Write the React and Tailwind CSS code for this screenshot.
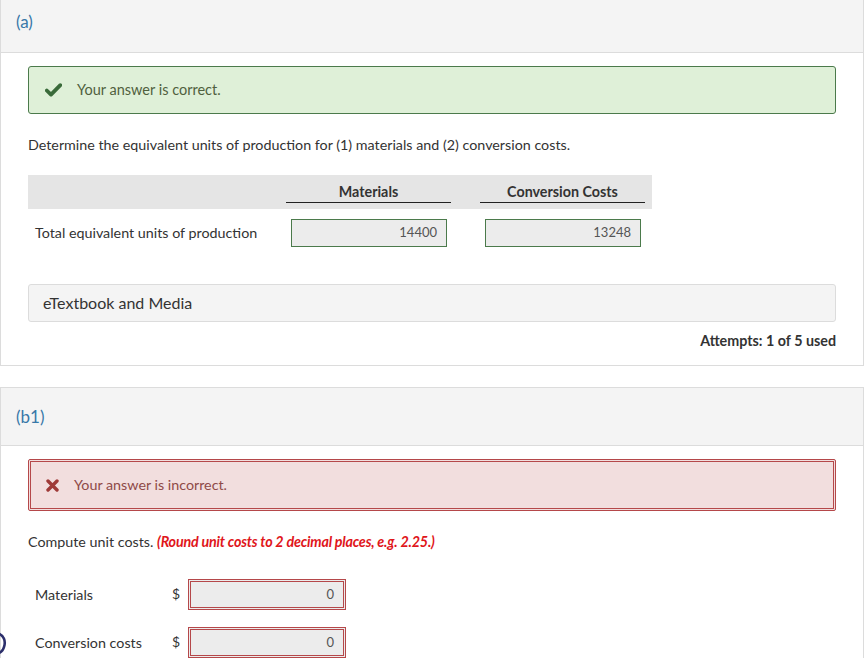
import React from "react";

const font = { fontFamily: "Lato, 'Open Sans', 'Liberation Sans', sans-serif" };

function CheckIcon() {
  return (
    <svg width="17" height="14" viewBox="0 0 17 14">
      <path d="M1.8 7.5 L6 11.6 L15.3 2.2" fill="none" stroke="#3a6b3a" strokeWidth="3.8" strokeLinecap="round" strokeLinejoin="round" />
    </svg>
  );
}

function CrossIcon() {
  return (
    <svg width="13" height="13" viewBox="0 0 13 13">
      <path d="M2 2 L11 11 M11 2 L2 11" fill="none" stroke="#9f3a38" strokeWidth="3.4" strokeLinecap="round" />
    </svg>
  );
}

function PanelHeader({ label, h }) {
  return (
    <div className={"flex items-center px-[15px] bg-[#f4f4f4] border-b border-[#dcdcdc] " + h}>
      <span className="text-[17px] text-[#3878a8]">{label}</span>
    </div>
  );
}

function GreenInput({ value }) {
  return (
    <div className="h-[28px] border border-[#4b7a4b] bg-[#ececec] flex items-center justify-end pr-[9px] text-[13px] text-[#555]">
      {value}
    </div>
  );
}

function RedInput({ value }) {
  return (
    <div className="w-[158px] h-[31px] border-[3px] border-double border-[#b5484a] bg-[#ececec] flex items-center justify-end pr-[9px] text-[13px] text-[#555]">
      {value}
    </div>
  );
}

export default function App() {
  return (
    <div className="w-[867px] h-[664px] overflow-hidden bg-white relative text-[#333]" style={font}>
      {/* part (a) */}
      <div className="w-[864px] border border-t-0 border-[#dcdcdc] bg-white">
        <PanelHeader label="(a)" h="h-[53px] pb-[8px]" />
        <div className="px-[27px] pt-[13px] pb-[16px]">
          <div className="h-[48px] rounded-[3px] border border-[#4b7a4b] bg-[#dff0d8] flex items-center pl-[16px]">
            <CheckIcon />
            <span className="ml-[15px] text-[14.5px] text-[#50603e]">Your answer is correct.</span>
          </div>

          <p className="mt-[21px] text-[14.3px] leading-[20px]">
            Determine the equivalent units of production for (1) materials and (2) conversion costs.
          </p>

          <div className="mt-[20px] w-[624px]">
            <div className="flex bg-[#e5e5e5] h-[34px]">
              <div className="w-[258px]" />
              <div className="w-[165px] flex items-end pb-[6px]">
                <div className="w-full text-center font-bold text-[14.3px] leading-[20px] border-b border-[#222]">Materials</div>
              </div>
              <div className="w-[165px] ml-[29px] flex items-end pb-[6px]">
                <div className="w-full text-center font-bold text-[14.3px] leading-[20px] border-b border-[#222]">Conversion Costs</div>
              </div>
            </div>
            <div className="flex items-center pt-[10px]">
              <div className="w-[258px] pl-[7px] text-[14.3px]">Total equivalent units of production</div>
              <div className="w-[165px] pl-[5px] pr-[4px]"><GreenInput value="14400" /></div>
              <div className="w-[165px] ml-[29px] pl-[5px] pr-[4px]"><GreenInput value="13248" /></div>
            </div>
          </div>

          <div className="mt-[37px] h-[38px] rounded-[3px] border border-[#dcdcdc] bg-[#f4f4f4] flex items-center pl-[14px] text-[16px] text-[#333]">
            eTextbook and Media
          </div>

          <div className="mt-[11px] text-right font-bold text-[14.3px] leading-[16px] text-[#333]">
            Attempts: 1 of 5 used
          </div>
        </div>
      </div>

      {/* part (b1) */}
      <div className="mt-[21px] w-[864px] border border-b-0 border-[#dcdcdc] bg-white">
        <PanelHeader label="(b1)" h="h-[58px]" />
        <div className="px-[27px] pt-[13px]">
          <div className="h-[52px] rounded-[2px] border-[3px] border-double border-[#b5484a] bg-[#f2dede] flex items-center pl-[15px]">
            <CrossIcon />
            <span className="ml-[15px] text-[14.3px] text-[#8f4a48]">Your answer is incorrect.</span>
          </div>

          <p className="mt-[21px] text-[14.3px] leading-[20px]">
            Compute unit costs.{" "}
            <span className="italic font-bold text-[#e0161b] tracking-[-0.2px]">(Round unit costs to 2 decimal places, e.g. 2.25.)</span>
          </p>

          <div className="mt-[27px] flex flex-col gap-[17px]">
            <div className="flex items-center">
              <span className="w-[144px] pl-[7px] text-[14.3px]">Materials</span>
              <span className="w-[16px] text-[14px] -mt-[3px]">$</span>
              <RedInput value="0" />
            </div>
            <div className="flex items-center">
              <span className="w-[144px] pl-[7px] text-[14.3px]">Conversion costs</span>
              <span className="w-[16px] text-[14px] -mt-[3px]">$</span>
              <RedInput value="0" />
            </div>
          </div>
        </div>
      </div>

      <svg className="absolute left-0 top-[630px]" width="8" height="28" viewBox="0 0 8 28">
        <path d="M-3 3 C4 5 6 11 4 17 C3 21 0 23 -3 24" fill="none" stroke="#2c2f6b" strokeWidth="2.6" />
      </svg>
    </div>
  );
}
